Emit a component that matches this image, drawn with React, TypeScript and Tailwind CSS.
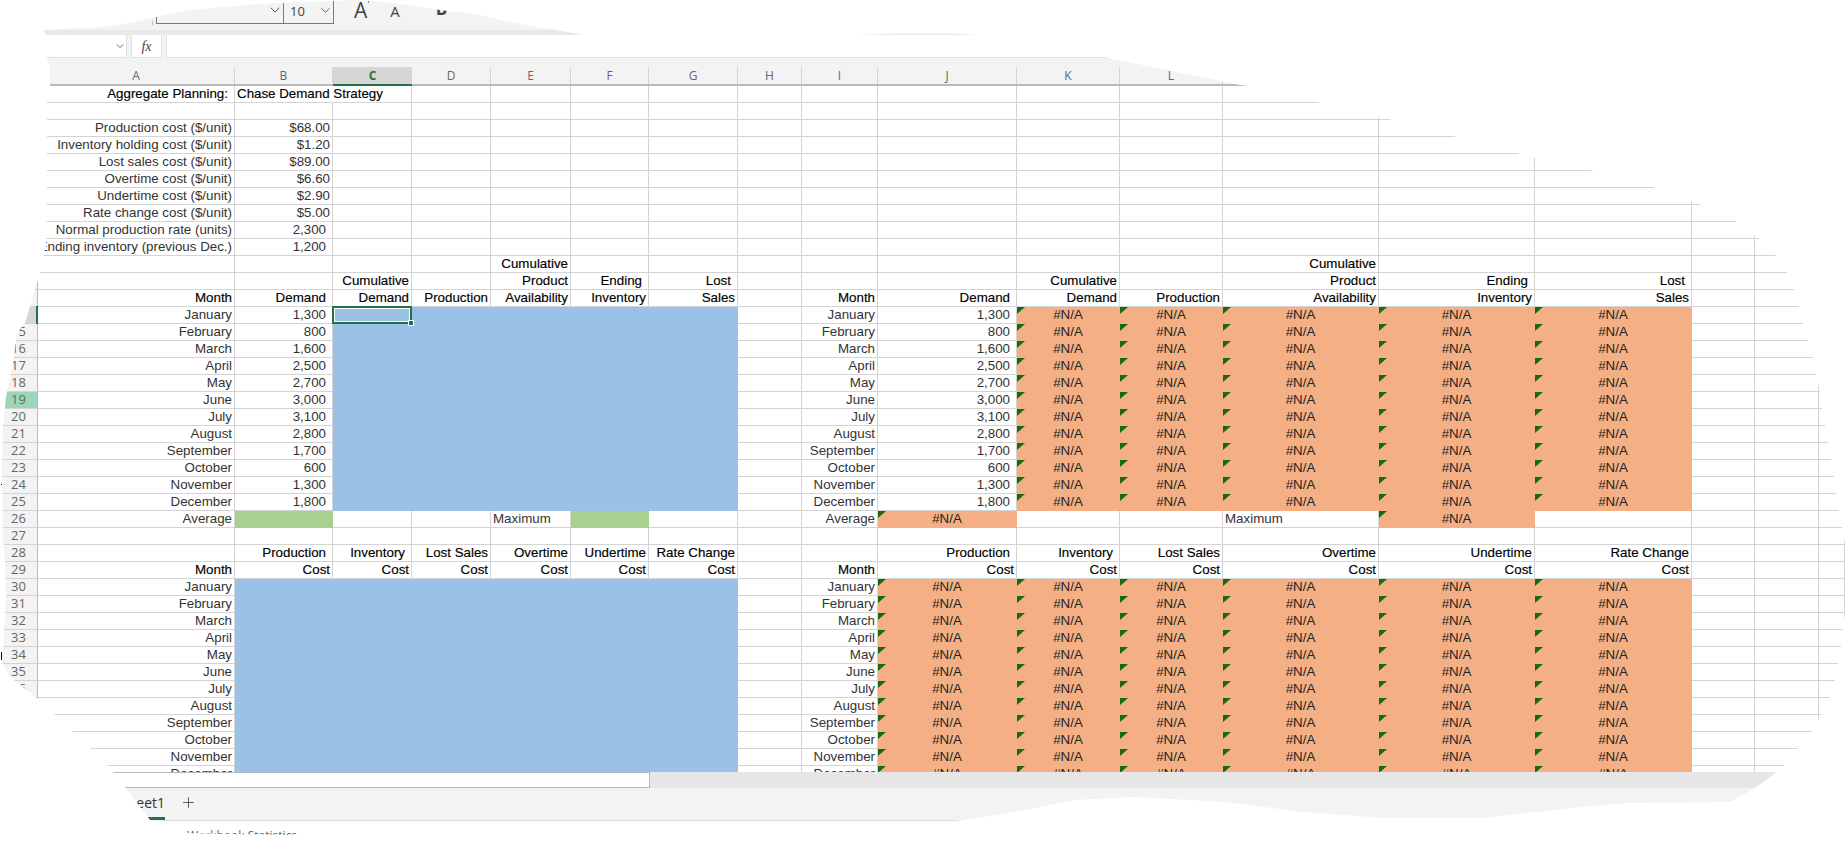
import React from "react";
import { ChevronDown, Plus } from "lucide-react";

type Cell = {
  t?: string;
  left?: boolean;
  center?: boolean;
  pad?: boolean;
  head?: boolean;
  fill?: "blue" | "orange" | "green";
  tri?: boolean;
  open?: boolean;
  selected?: boolean;
};

const LETTERS = ["A", "B", "C", "D", "E", "F", "G", "H", "I", "J", "K", "L", "M", "N", "O", "P", "Q", "R"];
const GRID_COLS =
  "grid grid-cols-[38px_197px_98px_79px_79px_80px_78px_89px_64px_76px_139px_103px_103px_156px_156px_157px_63px_64px_26px]";

const MONTHS = ["January", "February", "March", "April", "May", "June", "July", "August", "September", "October", "November", "December"];
const DEMAND = ["1,300", "800", "1,600", "2,500", "2,700", "3,000", "3,100", "2,800", "1,700", "600", "1,300", "1,800"];

const h = (t: string, pad = false): Cell => ({ t, head: true, pad });
const blue: Cell = { fill: "blue" };
const na: Cell = { t: "#N/A", center: true, fill: "orange", tri: true };

const PARAMS: [string, string, boolean][] = [
  ["Production cost ($/unit)", "$68.00", false],
  ["Inventory holding cost ($/unit)", "$1.20", false],
  ["Lost sales cost ($/unit)", "$89.00", false],
  ["Overtime cost ($/unit)", "$6.60", false],
  ["Undertime cost ($/unit)", "$2.90", false],
  ["Rate change cost ($/unit)", "$5.00", false],
  ["Normal production rate (units)", "2,300", true],
  ["Ending inventory (previous Dec.)", "1,200", true],
];

// row number -> column letter -> cell
function buildRows() {
  const rows: Record<number, Record<string, Cell>> = {};
  rows[1] = {
    A: { t: "Aggregate Planning:", head: true, pad: true },
    B: { t: "Chase Demand Strategy", head: true, left: true, open: true },
  };
  PARAMS.forEach(([label, value, pad], i) => {
    rows[3 + i] = { A: { t: label }, B: { t: value, pad } };
  });
  rows[11] = { E: h("Cumulative"), M: h("Cumulative") };
  rows[12] = {
    C: h("Cumulative"), E: h("Product"), F: h("Ending", true), G: h("Lost", true),
    K: h("Cumulative"), M: h("Product"), N: h("Ending", true), O: h("Lost", true),
  };
  rows[13] = {
    A: h("Month"), B: h("Demand", true), C: h("Demand"), D: h("Production"), E: h("Availability"), F: h("Inventory"), G: h("Sales"),
    I: h("Month"), J: h("Demand", true), K: h("Demand"), L: h("Production"), M: h("Availability"), N: h("Inventory"), O: h("Sales"),
  };
  MONTHS.forEach((m, i) => {
    rows[14 + i] = {
      A: { t: m }, B: { t: DEMAND[i], pad: true },
      C: i === 0 ? { fill: "blue", selected: true } : blue, D: blue, E: blue, F: blue, G: blue,
      I: { t: m }, J: { t: DEMAND[i], pad: true },
      K: na, L: na, M: na, N: na, O: na,
    };
    rows[30 + i] = {
      A: { t: m }, B: blue, C: blue, D: blue, E: blue, F: blue, G: blue,
      I: { t: m }, J: na, K: na, L: na, M: na, N: na, O: na,
    };
  });
  rows[26] = {
    A: { t: "Average" }, B: { fill: "green" }, E: { t: "Maximum", left: true }, F: { fill: "green" },
    I: { t: "Average" }, J: na, M: { t: "Maximum", left: true }, N: na,
  };
  rows[28] = {
    B: h("Production", true), C: h("Inventory", true), D: h("Lost Sales"), E: h("Overtime"), F: h("Undertime"), G: h("Rate Change"),
    J: h("Production", true), K: h("Inventory", true), L: h("Lost Sales"), M: h("Overtime"), N: h("Undertime"), O: h("Rate Change"),
  };
  rows[29] = {
    A: h("Month"), B: h("Cost"), C: h("Cost"), D: h("Cost"), E: h("Cost"), F: h("Cost"), G: h("Cost"),
    I: h("Month"), J: h("Cost"), K: h("Cost"), L: h("Cost"), M: h("Cost"), N: h("Cost"), O: h("Cost"),
  };
  return rows;
}

const ROWS = buildRows();
const ROW_NUMBERS = Array.from({ length: 41 }, (_, i) => i + 1);

// outline of the part of the window that is visible in the picture
const VISIBLE: [number, number][] = [
  [43, 30], [100, 27], [130, 23], [156, 17], [190, 10], [260, 4], [283, 3], [334, 1], [356, 0], [370, 1], [400, 4], [440, 10], [480, 15], [514, 23], [585, 35],
  [833, 36], [870, 34.5], [893, 33.5], [952, 33.5], [979, 35], [1100, 36], [1106, 57.5], [1240, 85],
  [1245, 85.5], [1319, 102.5], [1390, 119.5], [1455, 136.5], [1518, 153.5], [1592, 170.5], [1654, 187.5], [1701, 204.5], [1736, 221.5], [1759, 238.5], [1776, 255.5], [1787, 272.5], [1794, 289.5],
  [1799, 306.5], [1803, 323.5], [1808, 340.5], [1813, 357.5], [1816, 374.5], [1820, 391.5], [1822, 408.5], [1825, 425.5], [1828, 442.5], [1831, 459.5], [1834, 476.5], [1836, 493.5], [1839, 510.5], [1842, 527.5],
  [1845, 544], [1845, 612], [1843, 629], [1841, 646], [1838, 663], [1835, 680], [1830, 697], [1822, 714], [1812, 731], [1798, 748], [1784, 765], [1777, 772], [1755, 788], [1731, 802],
  [1628, 803], [1581, 807], [1482, 818], [1383, 818], [1304, 812], [1225, 802], [1134, 797], [1075, 800], [1015, 812], [956, 821],
  [400, 821], [320, 830], [290, 835], [180, 833], [165, 821], [150, 820], [125, 787], [113, 772], [107, 765], [90, 748], [72, 731], [54, 714], [38, 699],
  [23, 687], [10, 677], [2, 663], [4, 633], [6, 597], [5, 560], [3, 540], [2, 470], [3, 427], [6, 397], [13, 363], [17, 333], [25, 323], [38, 280], [42, 263], [46, 246], [47, 180], [47, 102], [50, 85], [50, 67], [47, 58], [47, 36],
];
const MASK = `M0 0H1845V843H0Z M${VISIBLE.map(([x, y]) => `${x} ${y}`).join("L")}Z`;

function GridCell({ cell }: { cell?: Cell }) {
  const fill =
    cell?.fill === "blue" ? "bg-[#9bc2e6] border-transparent"
    : cell?.fill === "orange" ? "bg-[#f4b084] border-transparent"
    : cell?.fill === "green" ? "bg-[#a9d08e] border-transparent"
    : cell?.open ? "border-b-[#d4d4d4] border-r-transparent"
    : "border-[#d4d4d4]";
  const align = cell?.left ? "justify-start pl-[2px]" : cell?.center ? "justify-center" : cell?.pad ? "justify-end pr-[6px]" : "justify-end pr-[2px]";
  const text = cell?.head ? "text-black [-webkit-text-stroke:0.15px_#000]" : cell?.tri ? "text-[#222]" : "text-[#333]";
  return (
    <div className={`relative flex h-[17px] items-center whitespace-nowrap border-b border-r pb-[1px] leading-[15px] ${fill} ${align} ${text}`}>
      {cell?.tri && <span className="absolute left-0 top-0 h-[7px] w-[8px] bg-[#156a14] [clip-path:polygon(0_0,100%_0,0_100%)]" />}
      {cell?.t}
      {cell?.selected && (
        <span className="absolute -bottom-px -left-px -right-px -top-px z-10 border-2 border-[#217346] shadow-[inset_0_0_0_1px_#fff]">
          <span className="absolute -bottom-[4px] -right-[4px] h-[6px] w-[6px] border border-white bg-[#217346]" />
        </span>
      )}
    </div>
  );
}

export default function App() {
  return (
    <div className="relative flex h-[843px] w-[1845px] flex-col overflow-hidden bg-white font-['Liberation_Sans',Arial,sans-serif] text-[13.33px]">
      {/* ribbon */}
      <div className="flex h-[30px] shrink-0 items-start bg-[#f3f3f3] pl-[152px]">
        <span className="mr-[3px] mt-[21px] h-[4px] w-px bg-[#bbb]" />
        <div className="flex h-[24px] w-[178px] shrink-0 border-b border-l border-r border-[#7a7a7a]">
          <div className="flex w-[127px] justify-end border-r border-[#7a7a7a] pt-[2px]">
            <ChevronDown size={16} strokeWidth={1.2} className="text-[#333]" />
          </div>
          <div className="flex flex-1 items-start justify-between pl-[6px] pt-[2px] font-['Open_Sans',sans-serif] text-[13px] text-[#444]">
            10
            <ChevronDown size={15} strokeWidth={1.2} className="mt-[1px] text-[#333]" />
          </div>
        </div>
        <div className="ml-[20px] flex items-start font-['Open_Sans',sans-serif] text-[#444]">
          <span className="text-[21px] leading-[21px]">A</span>
          <span className="ml-[1px] h-[3px] w-[6px] border-l border-t border-[#4a90d9]" />
          <span className="ml-[16px] mt-[2px] text-[15px] leading-[18px]">A</span>
          <span className="ml-[36px] text-[17px] font-bold leading-[17px]">B</span>
        </div>
      </div>
      <div className="h-[5px] shrink-0 bg-[#e9e9e9]" />

      {/* formula bar */}
      <div className="flex h-[23px] shrink-0 gap-[4px] bg-[#f3f3f3] pl-[47px]">
        <div className="flex w-[80px] items-center justify-end border-b border-r border-[#e1e1e1] bg-white">
          <ChevronDown size={12} strokeWidth={1.5} className="text-[#444]" />
        </div>
        <div className="flex w-[31px] items-center justify-center border border-t-0 border-[#e1e1e1] bg-white font-['Liberation_Serif',serif] text-[14px] italic text-[#444]">
          fx
        </div>
        <div className="flex-1 border-b border-l border-[#e1e1e1] bg-white" />
      </div>

      {/* column headers */}
      <div className="h-[28px] shrink-0 border-b-2 border-[#b9b9b9] bg-[#f3f3f3] pt-[9px] font-['Open_Sans',sans-serif] text-[12px] text-[#666]">
        <div className={GRID_COLS}>
          <div />
          {LETTERS.map((l) => (
            <div
              key={l}
              className={
                l === "C"
                  ? "-mb-[2px] flex h-[19px] items-center justify-center border-b-2 border-[#217346] bg-[#d6d5d4] font-bold text-[#217346]"
                  : "flex h-[17px] items-center justify-center border-r border-[#d4d4d4]"
              }
            >
              {l}
            </div>
          ))}
        </div>
      </div>

      {/* sheet */}
      <div className="h-[686px] shrink-0 overflow-hidden">
        {ROW_NUMBERS.map((n) => (
          <div key={n} className={GRID_COLS}>
            <div
              className={`relative flex h-[17px] items-center justify-center border-b border-r border-b-[#d4d4d4] border-r-[#b9b9b9] font-['Open_Sans',sans-serif] text-[13px] text-[#666] ${
                n === 14 ? "bg-[#d6d5d4]" : n === 19 ? "bg-[#9fd5b7]" : "bg-[#f3f3f3]"
              }`}
            >
              {n}
              {n === 14 && <span className="absolute -right-px -top-px h-[19px] w-[2px] bg-[#217346]" />}
            </div>
            {LETTERS.map((l) => (
              <GridCell key={l} cell={ROWS[n]?.[l]} />
            ))}
          </div>
        ))}
      </div>

      {/* horizontal scrollbar */}
      <div className="flex h-[16px] shrink-0 bg-[#e6e6e6]">
        <div className="w-[650px] border-y border-r border-[#b9b9b9] bg-white" />
      </div>

      {/* sheet tabs */}
      <div className="flex h-[33px] shrink-0 items-end border-b border-[#dcdcdc] bg-[#f3f3f3] pl-[112px]">
        <div className="flex h-[32px] w-[53px] items-center justify-end border-b-[3px] border-[#217346] font-['Open_Sans',sans-serif] text-[14px] text-[#333]">
          Sheet1
        </div>
        <Plus size={17} strokeWidth={1.1} className="mb-[9px] ml-[15px] text-[#333]" />
      </div>

      {/* status bar */}
      <div className="flex-1 pl-[187px] pt-[6px] font-['Open_Sans',sans-serif] text-[12px] text-[#666]">Workbook Statistics</div>

      {/* white outer shape that cuts the window down to what the picture shows */}
      <svg className="pointer-events-none absolute inset-0 z-20" width="1845" height="843" viewBox="0 0 1845 843">
        <path d={MASK} fill="#fff" fillRule="evenodd" />
      </svg>
      <span className="absolute left-[1px] top-[484px] z-30 h-px w-px bg-black" />
      <span className="absolute left-[1px] top-[652px] z-30 h-[8px] w-px bg-black" />
    </div>
  );
}
